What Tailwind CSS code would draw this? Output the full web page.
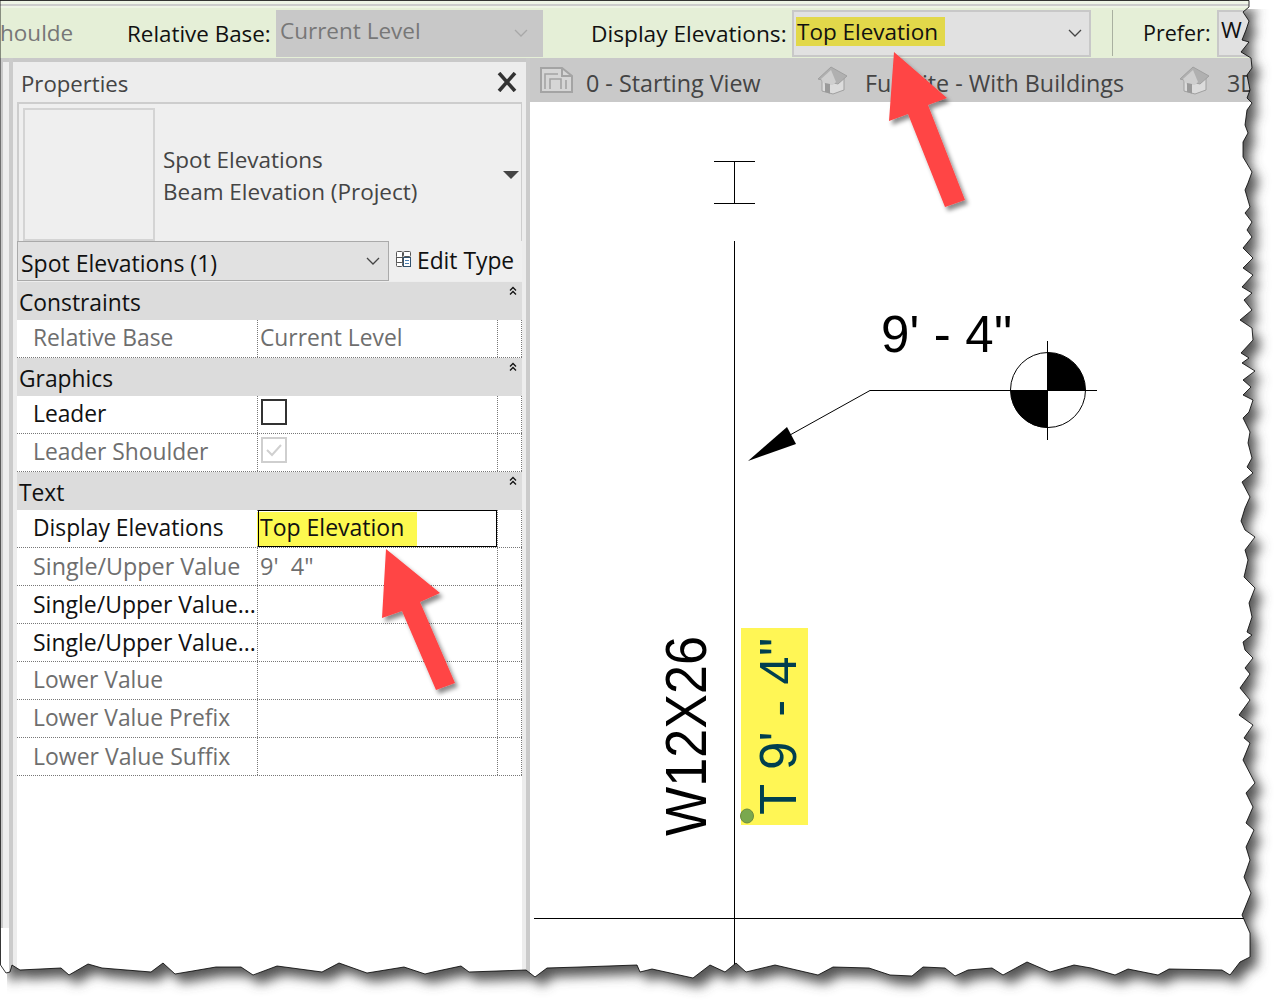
<!DOCTYPE html>
<html lang="en">
<head>
  <meta charset="UTF-8">
  <title>Spot Elevation Properties</title>
  <script src="https://cdn.jsdelivr.net/npm/@tailwindcss/browser@4"></script>
</head>
<body class="bg-white">
  <div class="relative w-[1283px] h-[1005px] overflow-hidden flex flex-col font-['Open_Sans',sans-serif] text-[22.5px] text-[#111]">

    <!-- top edge -->
    <div class="h-[8px] bg-[#eef4e6] pt-[4px]"><div class="h-[2px] bg-[#cccccc]"></div></div>

    <!-- options bar -->
    <div class="h-[50px] shrink-0 flex items-center bg-[#e5efd7] whitespace-nowrap">
      <div class="w-[72px] text-[#777]">houlde</div>
      <div class="ml-[55px] w-[149px] text-[22.4px] mt-[1px]">Relative Base:</div>
      <div class="w-[267px] h-[47px] bg-[#c8c8c8] flex items-center justify-between pl-[4px] pr-[15px] text-[#777]">
        <span class="-mt-[4px]">Current Level</span>
        <svg width="14" height="8" viewBox="0 0 14 8" fill="none" stroke="#a8a8a8" stroke-width="1.3"><path d="M1 1l6 6 6-6"/></svg>
      </div>
      <div class="ml-[48px] w-[201px] text-[22.7px] mt-[2px]">Display Elevations:</div>
      <div class="w-[299px] h-[47px] bg-[#e1e1e1] border-2 border-[#c8c8c8] flex items-center justify-between pl-[2px] pr-[7px]">
        <span class="w-[149px] h-[29px] bg-[#e2d84a] flex items-center pl-[1px] -mt-[3px]">Top Elevation</span>
        <svg width="14" height="8" viewBox="0 0 14 8" fill="none" stroke="#444" stroke-width="1.3"><path d="M1 1l6 6 6-6"/></svg>
      </div>
      <div class="ml-[21px] w-px h-[46px] bg-[#a9b0a0]"></div>
      <div class="ml-[30px] w-[74px] text-[21.5px] mt-[1px]">Prefer:</div>
      <div class="w-[60px] h-[47px] bg-[#e1e1e1] border-2 border-[#c8c8c8] pl-[2px] leading-[36px]">W</div>
    </div>

    <!-- body -->
    <div class="flex-1 flex min-h-0">
      <div class="w-[3px] bg-[#c9c9c9] h-[870px]"></div>
      <div class="w-[6px] flex flex-col"><div class="h-[4px] bg-[#c9c9c9]"></div><div class="h-[866px] bg-[#eeeeee]"></div></div>
      <div class="w-[4px] bg-[#cbcbcb]"></div>

      <!-- properties palette -->
      <div class="w-[513px] flex flex-col bg-[#ededed] border-t-[4px] border-[#c9c9c9] px-[4px]">
        <div class="h-[40px] shrink-0 flex items-center justify-between text-[#444] pl-[4px] pr-[5px]">
          <span class="mt-[4px] text-[22.2px]">Properties</span>
          <svg width="20" height="20" viewBox="0 0 20 20" class="-mt-[1px]" stroke="#333" stroke-width="3.6" fill="none"><path d="M2 1l16 18M18 1L2 19"/></svg>
        </div>
        <div class="h-[139px] shrink-0 flex items-stretch border-t-2 border-x-2 border-[#cdcdcd] border-r-[1px] pt-[4px] pl-[4px] bg-[#efefef]">
          <div class="w-[132px] h-[133px] border-2 border-[#d4d4d4]"></div>
          <div class="ml-[8px] flex-1 flex flex-col justify-center text-[#444] leading-[32px] mt-[2px]">
            <div>Spot Elevations</div>
            <div>Beam Elevation (Project)</div>
          </div>
          <svg width="16" height="8" viewBox="0 0 16 8" class="self-center mr-[2px]"><path d="M0 0h16L8 8z" fill="#444"/></svg>
        </div>
        <div class="h-[40px] shrink-0 flex bg-[#efefef]">
          <div class="w-[372px] h-[40px] bg-[#e1e1e1] border border-[#aaaaaa] flex items-center justify-between pl-[3px] pr-[8px]">
            <span class="text-[23px] mt-[4px]">Spot Elevations (1)</span>
            <svg width="14" height="8" viewBox="0 0 14 8" fill="none" stroke="#444" stroke-width="1.3"><path d="M1 1l6 6 6-6"/></svg>
          </div>
          <div class="flex-1 flex items-center pl-[6px]">
            <svg width="17" height="17" viewBox="0 0 17 17" class="-mt-[3px]" fill="#fff" stroke="#555" stroke-width="1">
              <rect x="1.500" y=".500" width="6" height="6" rx="1"/><rect x="1.500" y="6.500" width="6" height="5"/><rect x="1.500" y="11.500" width="6" height="4" rx="1"/>
              <rect x="8.500" y=".500" width="7" height="5" rx="1"/><rect x="8.500" y="6.500" width="7" height="9" stroke="#33536f"/>
              <path d="M10 9.500h4M10 12.500h4" stroke="#4a7fb0"/>
            </svg>
            <span class="ml-[5px] text-[22.8px]">Edit Type</span>
          </div>
        </div>

        <!-- table -->
        <div class="flex-1 mt-px bg-white flex flex-col text-[22.8px]">
          <div class="h-[38px] shrink-0 bg-[#dcdcdc] flex justify-between pl-[2px]">
            <span class="mt-[4px]">Constraints</span>
            <svg width="10" height="10" viewBox="0 0 10 10" class="mt-[4px] mr-[4px]" fill="none" stroke="#111" stroke-width="1.3"><path d="M2 4.500L5 1.500l3 3M2 8.500L5 5.500l3 3"/></svg>
          </div>
          <div class="h-[38px] shrink-0 flex border-b border-dotted border-[#777]">
            <div class="w-[241px] border-r border-dotted border-[#777] pl-[16px] flex items-center text-[#6e6e6e]">Relative Base</div>
            <div class="w-[240px] border-r border-dotted border-[#777] pl-[2px] flex items-center text-[#6e6e6e]">Current Level</div>
            <div class="w-[24px] border-r border-dotted border-[#777]"></div>
          </div>
          <div class="h-[38px] shrink-0 bg-[#dcdcdc] flex justify-between pl-[2px]">
            <span class="mt-[4px]">Graphics</span>
            <svg width="10" height="10" viewBox="0 0 10 10" class="mt-[4px] mr-[4px]" fill="none" stroke="#111" stroke-width="1.3"><path d="M2 4.500L5 1.500l3 3M2 8.500L5 5.500l3 3"/></svg>
          </div>
          <div class="h-[38px] shrink-0 flex border-b border-dotted border-[#777]">
            <div class="w-[241px] border-r border-dotted border-[#777] pl-[16px] flex items-center">Leader</div>
            <div class="w-[240px] border-r border-dotted border-[#777] pl-[3px] pt-[3px]"><div class="w-[26px] h-[26px] border-2 border-[#333]"></div></div>
            <div class="w-[24px] border-r border-dotted border-[#777]"></div>
          </div>
          <div class="h-[38px] shrink-0 flex border-b border-dotted border-[#777]">
            <div class="w-[241px] border-r border-dotted border-[#777] pl-[16px] flex items-center text-[#6e6e6e]">Leader Shoulder</div>
            <div class="w-[240px] border-r border-dotted border-[#777] pl-[3px] pt-[3px]">
              <div class="w-[26px] h-[26px] border-2 border-[#cfcfcf] flex items-center justify-center">
                <svg width="18" height="14" viewBox="0 0 18 14" fill="none" stroke="#d0d0d0" stroke-width="2"><path d="M2 7l5 5L16 2"/></svg>
              </div>
            </div>
            <div class="w-[24px] border-r border-dotted border-[#777]"></div>
          </div>
          <div class="h-[38px] shrink-0 bg-[#dcdcdc] flex justify-between pl-[2px]">
            <span class="mt-[4px]">Text</span>
            <svg width="10" height="10" viewBox="0 0 10 10" class="mt-[4px] mr-[4px]" fill="none" stroke="#111" stroke-width="1.3"><path d="M2 4.500L5 1.500l3 3M2 8.500L5 5.500l3 3"/></svg>
          </div>
          <div class="h-[38px] shrink-0 flex border-b border-dotted border-[#777]">
            <div class="w-[241px] border-r border-dotted border-[#777] pl-[16px] flex items-center">Display Elevations</div>
            <div class="relative w-[240px] border-r border-dotted border-[#777] pt-[3px]">
              <div class="w-[160px] h-[34px] -ml-px bg-[#fdf94f] pl-[3px] pb-[4px] flex items-center -mt-px text-[23px]">Top Elevation</div>
              <div class="absolute left-0 top-0 w-[239px] h-[37px] border border-black"></div>
            </div>
            <div class="w-[24px] border-r border-dotted border-[#777]"></div>
          </div>
          <div class="h-[38px] shrink-0 flex border-b border-dotted border-[#777]">
            <div class="w-[241px] border-r border-dotted border-[#777] pl-[16px] flex items-center text-[#6e6e6e] text-[23.3px]">Single/Upper Value</div>
            <div class="w-[240px] border-r border-dotted border-[#777] pl-[2px] flex items-center text-[#6e6e6e] whitespace-pre text-[23.5px]">9'  4"</div>
            <div class="w-[24px] border-r border-dotted border-[#777]"></div>
          </div>
          <div class="h-[38px] shrink-0 flex border-b border-dotted border-[#777]">
            <div class="w-[241px] border-r border-dotted border-[#777] pl-[16px] flex items-center whitespace-nowrap text-[23px]">Single/Upper Value...</div>
            <div class="w-[240px] border-r border-dotted border-[#777]"></div>
            <div class="w-[24px] border-r border-dotted border-[#777]"></div>
          </div>
          <div class="h-[38px] shrink-0 flex border-b border-dotted border-[#777]">
            <div class="w-[241px] border-r border-dotted border-[#777] pl-[16px] flex items-center whitespace-nowrap text-[23px]">Single/Upper Value...</div>
            <div class="w-[240px] border-r border-dotted border-[#777]"></div>
            <div class="w-[24px] border-r border-dotted border-[#777]"></div>
          </div>
          <div class="h-[38px] shrink-0 flex border-b border-dotted border-[#777]">
            <div class="w-[241px] border-r border-dotted border-[#777] pl-[16px] flex items-center text-[#6e6e6e]">Lower Value</div>
            <div class="w-[240px] border-r border-dotted border-[#777]"></div>
            <div class="w-[24px] border-r border-dotted border-[#777]"></div>
          </div>
          <div class="h-[38px] shrink-0 flex border-b border-dotted border-[#777]">
            <div class="w-[241px] border-r border-dotted border-[#777] pl-[16px] flex items-center text-[#6e6e6e]">Lower Value Prefix</div>
            <div class="w-[240px] border-r border-dotted border-[#777]"></div>
            <div class="w-[24px] border-r border-dotted border-[#777]"></div>
          </div>
          <div class="h-[38px] shrink-0 flex border-b border-dotted border-[#777]">
            <div class="w-[241px] border-r border-dotted border-[#777] pl-[16px] flex items-center text-[#6e6e6e] text-[23px]">Lower Value Suffix</div>
            <div class="w-[240px] border-r border-dotted border-[#777]"></div>
            <div class="w-[24px] border-r border-dotted border-[#777]"></div>
          </div>
        </div>
      </div>
      <div class="w-[4px] bg-[#cbcbcb]"></div>

      <!-- view area -->
      <div class="flex-1 flex flex-col min-w-0">
        <div class="h-[44px] shrink-0 bg-[#c9c9c9] flex items-center whitespace-nowrap text-[#444] text-[23.3px]">
          <svg width="33" height="27" viewBox="0 0 33 27" class="ml-[10px]" fill="none" stroke="#a4a4a4" stroke-width="2">
            <path d="M1 1h21l10 8v16H1z" fill="#d6d6d6"/><path d="M22 1v8h10"/><path d="M5 22V7h13M10 22V12h11v10M26 13v9" stroke-width="1.6"/>
          </svg>
          <span class="ml-[13px] w-[231px] mt-[7px]">0 - Starting View</span>
          <svg width="31" height="29" viewBox="0 0 31 29">
            <path d="M5 12v13l11 3 11-4V11z" fill="#dcdcdc" stroke="#a0a0a0"/>
            <path d="M1 13L14 1l16 9-9 8z" fill="#b0b0b0" stroke="#a0a0a0"/>
            <path d="M4 13L14 4l5 12-3 3H8z" fill="#cfcfcf"/>
            <path d="M8 17v9l5 1.500V18z" fill="#9a9a9a"/>
          </svg>
          <span class="ml-[17px] w-[314px] mt-[7px]">Full Site - With Buildings</span>
          <svg width="31" height="29" viewBox="0 0 31 29">
            <path d="M5 12v13l11 3 11-4V11z" fill="#dcdcdc" stroke="#a0a0a0"/>
            <path d="M1 13L14 1l16 9-9 8z" fill="#b0b0b0" stroke="#a0a0a0"/>
            <path d="M4 13L14 4l5 12-3 3H8z" fill="#cfcfcf"/>
            <path d="M8 17v9l5 1.500V18z" fill="#9a9a9a"/>
          </svg>
          <span class="ml-[17px] mt-[7px]">3D</span>
        </div>

        <!-- drawing canvas, coordinates are page coordinates -->
        <div class="relative flex-1 bg-white">
          <svg class="absolute left-0 top-0 font-['Liberation_Sans',sans-serif]" width="753" height="903" viewBox="530 102 753 903">
            <g stroke="#000" stroke-width="1" fill="none" shape-rendering="crispEdges">
              <path d="M714 161.500H755M714 203.500H755M734.500 161V204"/>
              <path d="M734.500 241V968M534 918.500H1250"/>
              <path d="M1047.500 341V440M870 390.500H1097"/>
            </g>
            <path d="M870 390.500L790 435" stroke="#000" fill="none"/>
            <path d="M748 461L787 427L796 444z" fill="#000"/>
            <circle cx="1048" cy="390" r="37.500" fill="none" stroke="#000"/>
            <path d="M1048 352.500A37.500 37.500 0 0 1 1085.500 390.500H1048z" fill="#000"/>
            <path d="M1048 428A37.500 37.500 0 0 1 1010.500 390.500H1048z" fill="#000"/>
            <text x="881" y="352" font-size="51" textLength="131" fill="#000">9' - 4"</text>
            <text transform="translate(706 836) rotate(-90) scale(1 1.100)" font-size="52" textLength="200" fill="#000">W12X26</text>
            <rect x="741" y="628" width="67" height="197" fill="#fff655"/>
            <text transform="translate(796 815) rotate(-90)" font-size="51" textLength="177" fill="#003f4f">T 9' - 4"</text>
            <ellipse cx="747" cy="816" rx="6.500" ry="7" fill="#7aa84e" stroke="#6d8a3e"/>
          </svg>
        </div>
      </div>
    </div>

    <!-- torn edge and callout arrows -->
    <svg class="absolute left-0 top-0" width="1283" height="1005" viewBox="0 0 1283 1005">
      <defs>
        <path id="edge" d="M0 .500H1249L1249 7 1243 12 1249 21 1246 30 1242 40 1249 42 1241 52 1251 58 1252 68 1247 75 1250 90 1247 98 1252 103 1247 110 1245 125 1248 133 1243 142 1243 157 1252 172 1248 183 1245 190 1250 207 1245 213 1252 222 1247 230 1252 237 1243 248 1253 258 1243 268 1253 275 1242 287 1252 293 1244 300 1252 310 1240 320 1252 328 1253 340 1241 353 1249 358 1242 363 1255 371 1243 380 1251 387 1243 395 1253 400 1249 412 1243 418 1250 432 1248 443 1252 458 1247 467 1253 473 1242 482 1250 497 1245 508 1241 521 1245 530 1255 537 1245 550 1248 560 1244 577 1255 588 1249 603 1252 617 1247 632 1252 635 1243 642 1245 650 1253 658 1245 668 1250 674 1240 688 1250 700 1239 715 1253 725 1244 738 1250 743 1243 760 1255 783 1246 793 1253 807 1246 823 1254 830 1246 847 1250 860 1244 877 1251 893 1242 915 1250 933 1250 957 1240 962 1230 975 1222 970 1169 969 1158 975 1128 969 1115 975 1091 968 1074 965 1050 972 1027 962 1003 975 992 968 968 970 955 976 945 968 923 967 912 976 890 975 869 968 833 967 818 975 775 965 746 972 736 963 725 972 710 965 693 978 652 969 640 972 637 965 580 967 547 968 535 977 526 970 469 972 461 966 433 972 425 974 404 967 367 973 339 963 322 972 277 966 253 975 241 967 216 967 175 974 163 963 151 972 102 968 88 964 69 975 61 968 20 970 12 965 10 972 6 973 .500 965z"/>
        <mask id="outside" maskUnits="userSpaceOnUse" x="0" y="0" width="1283" height="1005">
          <rect width="1283" height="1005" fill="#fff"/>
          <use href="#edge" fill="#000"/>
        </mask>
        <filter id="blur" filterUnits="userSpaceOnUse" x="0" y="0" width="1283" height="1005"><feGaussianBlur stdDeviation="6"/></filter>
        <filter id="arrowShadow" filterUnits="userSpaceOnUse" x="0" y="0" width="1283" height="1005"><feDropShadow dx="3" dy="4" stdDeviation="2" flood-color="#000" flood-opacity=".45"/></filter>
      </defs>
      <g mask="url(#outside)">
        <rect width="1283" height="1005" fill="#fff"/>
        <use href="#edge" transform="translate(7 9)" fill="#555" filter="url(#blur)"/>
      </g>
      <use href="#edge" fill="none" stroke="#000" stroke-width=".8"/>
      <g fill="#ff4444" filter="url(#arrowShadow)">
        <path d="M894 52L947 98 928 105 965 200 945 207 908 114 889 121z"/>
        <path d="M386 549L440 593 420 602 455 683 436 690 402 611 382 618z"/>
      </g>
    </svg>
  </div>
</body>
</html>
